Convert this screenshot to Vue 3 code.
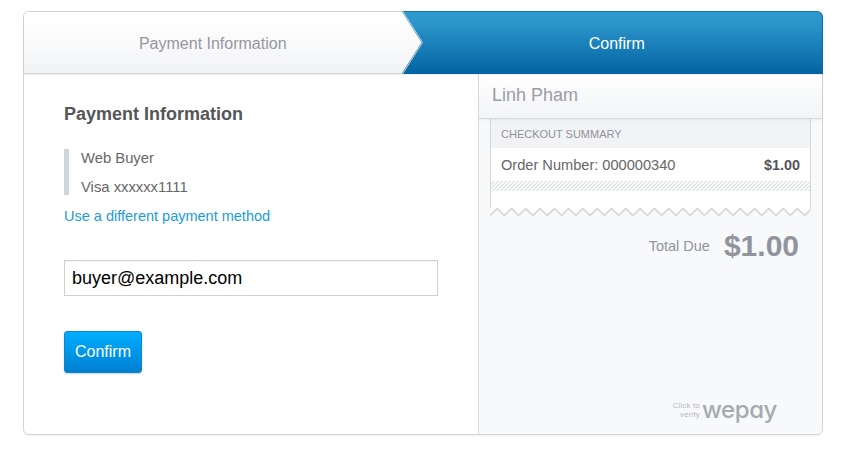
<script setup>
const lines = ['Web Buyer', 'Visa xxxxxx1111']
</script>

<template>
  <div class="page">
    <div class="card">
      <header class="steps">
        <div class="step first">Payment Information</div>
        <div class="step active">
          <span>Confirm</span>
          <svg class="edge" width="22" height="63" viewBox="0 0 22 63" aria-hidden="true">
            <polyline points="0.5,0 20.5,31.5 0.5,63" fill="none" stroke="#d4d6d8" stroke-width="1" />
          </svg>
        </div>
      </header>
      <div class="body">
        <main class="left">
          <h2>Payment Information</h2>
          <div class="method">
            <div v-for="l in lines" :key="l">{{ l }}</div>
          </div>
          <a class="link">Use a different payment method</a>
          <input class="email" value="buyer@example.com" />
          <button class="btn">Confirm</button>
        </main>
        <aside class="right">
          <div class="name">Linh Pham</div>
          <div class="receipt">
            <div class="sum-title">CHECKOUT SUMMARY</div>
            <div class="row"><span>Order Number: 000000340</span><b>$1.00</b></div>
            <div class="hatch"></div>
            <div class="blank"></div>
            <svg class="zig" width="321" height="9" viewBox="0 0 321 9" aria-hidden="true">
              <defs>
                <pattern id="zz" x="0" y="0" width="14.3" height="9" patternUnits="userSpaceOnUse">
                  <path d="M0 7.5 L7.15 0.5 L14.3 7.5 V0 H0 Z" fill="#fff" />
                  <path d="M0 7.5 L7.15 0.5 L14.3 7.5" fill="none" stroke="#cfd1d3" stroke-width="1.5" />
                </pattern>
              </defs>
              <rect width="321" height="9" fill="url(#zz)" />
            </svg>
          </div>
          <div class="total"><span>Total Due</span><strong>$1.00</strong></div>
          <div class="verify">
            <div class="click">Click to<br />verify</div>
            <div class="logo">wepay</div>
          </div>
        </aside>
      </div>
    </div>
  </div>
</template>

<style scoped>
.page {
  padding: 11px 19px 24px 23px;
  font-family: "Liberation Sans", Arial, sans-serif;
}
.card {
  width: 800px;
  height: 424px;
  box-sizing: border-box;
  border: 1px solid #d2d4d6;
  border-radius: 6px;
  display: flex;
  flex-direction: column;
  background: #fff;
  box-shadow: 0 1px 1px rgba(0, 0, 0, 0.06);
}
.steps {
  height: 61px;
  flex: none;
  display: flex;
  border-radius: 5px 5px 0 0;
  background: linear-gradient(#ffffff 0%, #fdfdfd 25%, #f2f3f5 100%);
  border-bottom: 1px solid #cfd1d3;
  box-shadow: 0 1px 2px rgba(0, 0, 0, 0.08);
  position: relative;
  z-index: 2;
}
.step {
  display: flex;
  align-items: center;
  justify-content: center;
  font-size: 16px;
  box-sizing: border-box;
  padding-top: 2px;
}
.first {
  width: 377.5px;
  flex: none;
  color: #95979f;
}
.active {
  flex: 1;
  position: relative;
  margin: -1px -1px -1px 0;
  color: #fff;
  padding-left: 10px;
  border-top: 1px solid #1b72a8;
  border-right: 1px solid #0f6ba6;
  border-radius: 0 6px 0 0;
  background: linear-gradient(#2f9bce 0%, #2a94c8 20%, #0463a3 100%);
  clip-path: polygon(0 0, 100% 0, 100% 100%, 0 100%, 20px 50%);
}
.edge {
  position: absolute;
  left: 0;
  top: -1px;
}
.body {
  flex: 1;
  display: flex;
  min-height: 0;
}
.left {
  width: 455px;
  flex: none;
  box-sizing: border-box;
  padding: 28px 40px 0;
  border-right: 1px solid #d8dadc;
  display: flex;
  flex-direction: column;
  align-items: flex-start;
}
h2 {
  margin: 0;
  font-size: 18px;
  line-height: 24px;
  font-weight: bold;
  color: #555659;
}
.method {
  margin-top: 23px;
  border-left: 5px solid #cfd6e0;
  padding-left: 12px;
  font-size: 14.8px;
  line-height: 29px;
  height: 46px;
  color: #666;
}
.method div:first-child {
  margin-top: -5px;
}
.link {
  margin-top: 11px;
  font-size: 14.5px;
  line-height: 20px;
  color: #1a9bdc;
}
.email {
  margin-top: 34px;
  width: 374px;
  height: 36px;
  box-sizing: border-box;
  border: 1px solid #d0d0d0;
  padding: 0 7px;
  font: 18px "Liberation Sans", Arial, sans-serif;
  color: #000;
  outline: none;
  box-shadow: inset 0 1px 1px rgba(0, 0, 0, 0.04);
}
.btn {
  margin-top: 35px;
  width: 78px;
  height: 42px;
  border: 1px solid #0a86d0;
  border-radius: 3px;
  padding: 0;
  background: linear-gradient(#00aeff, #007fd1);
  color: #fff;
  font: 16px "Liberation Sans", Arial, sans-serif;
  box-shadow: 0 1px 2px rgba(0, 0, 0, 0.2);
}
.right {
  flex: 1;
  background: #f7f9fb;
  border-radius: 0 0 5px 0;
  display: flex;
  flex-direction: column;
  min-width: 0;
}
.name {
  height: 45px;
  flex: none;
  box-sizing: border-box;
  padding: 0 13px 1px;
  display: flex;
  align-items: center;
  font-size: 18px;
  color: #9a9da6;
  background: linear-gradient(#ffffff, #f2f4f6);
  border-bottom: 1px solid #d6d8da;
  box-shadow: 0 1px 2px rgba(0, 0, 0, 0.06);
  position: relative;
  z-index: 1;
}
.receipt {
  margin: 0 11px;
  border: 1px solid #d4d6d8;
  border-width: 0 1px;
  box-sizing: border-box;
  width: 321px;
  display: flex;
  flex-direction: column;
}
.sum-title {
  height: 29px;
  box-sizing: border-box;
  padding-left: 10px;
  display: flex;
  align-items: center;
  font-size: 11px;
  color: #8f929b;
  background: #f2f3f5;
}
.row {
  height: 33px;
  box-sizing: border-box;
  padding: 0 10px;
  display: flex;
  align-items: center;
  justify-content: space-between;
  font-size: 14.6px;
  color: #666;
  background: #fff;
}
.row b {
  color: #555659;
  font-size: 14.4px;
}
.hatch {
  height: 10px;
  background: repeating-linear-gradient(135deg, #fff 0, #fff 1.83px, #e3e4e6 1.83px, #e3e4e6 2.83px);
}
.blank {
  height: 17px;
  background: #fff;
}
.zig {
  display: block;
  margin: 0 -1px;
  background: #f7f9fb;
}
.total {
  margin-top: 10px;
  padding-right: 23px;
  display: flex;
  justify-content: flex-end;
  align-items: center;
  gap: 14px;
  color: #91949d;
}
.total span {
  font-size: 14.5px;
}
.total strong {
  font-size: 30px;
  line-height: 37px;
}
.verify {
  margin-top: auto;
  margin-bottom: 11px;
  padding-right: 45px;
  display: flex;
  justify-content: flex-end;
  align-items: center;
  gap: 2px;
  color: #a6abad;
}
.click {
  font-size: 7.8px;
  line-height: 9px;
  letter-spacing: 0.2px;
  text-align: right;
  color: #b5b8ba;
}
.logo {
  font-family: "Inter", sans-serif;
  font-feature-settings: "cv11";
  font-size: 24px;
  line-height: 26px;
  font-weight: 500;
  letter-spacing: -0.4px;
}
</style>
